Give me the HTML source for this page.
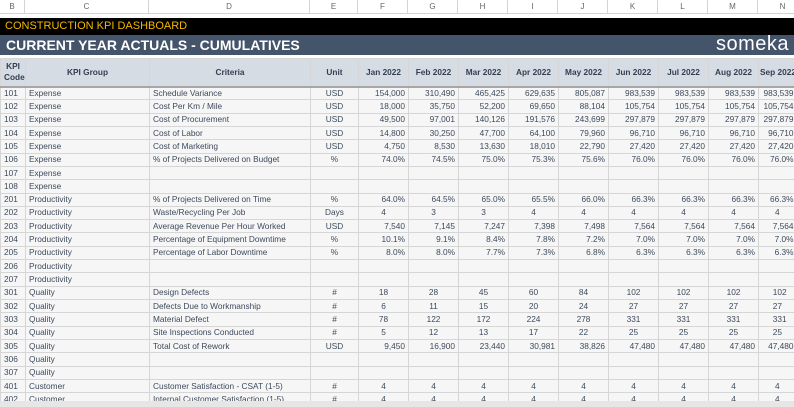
<!DOCTYPE html><html><head><style>
*{margin:0;padding:0;box-sizing:border-box}
body{width:794px;height:407px;overflow:hidden;background:#fff;font-family:"Liberation Sans",sans-serif;position:relative}
.colh{position:absolute;top:0;height:14px;border-right:1px solid #d4d4d4;border-bottom:1px solid #d4d4d4;font-size:8px;color:#666;text-align:center;line-height:13px}
.bk{position:absolute;left:0;top:18px;width:794px;height:17px;background:#000;color:#f5b800;font-size:11px;line-height:17px;padding-left:5px}
.sl{position:absolute;left:0;top:35px;width:794px;height:20px;background:#44546a;color:#fff;font-weight:bold;font-size:14px;line-height:20px;padding-left:6px}
.logo{position:absolute;right:5px;top:34px;color:#fff;font-size:20px;line-height:20px;letter-spacing:0.5px}
table{position:absolute;left:0;top:58px;border-collapse:collapse;table-layout:fixed;width:794px}
td{border:1px solid #d6d6d6;font-size:8.3px;color:#3d4a5c;height:13.32px;line-height:11px;padding:0 3px;white-space:nowrap;overflow:hidden;background:#f6f6f6}
thead td{background:#d6dce4;font-weight:bold;text-align:center;height:28px;color:#333f50;border-bottom:2px solid #a6a6a6}
td.n{text-align:right}td.c{text-align:center}
td:last-child{text-align:right;padding:0 1px;border-right:none}
.foot{position:absolute;left:0;top:401px;width:794px;height:6px;background:#e6e6e6}
</style></head><body>
<div class="colh" style="left:0;width:25px">B</div><div class="colh" style="left:25px;width:124px">C</div><div class="colh" style="left:149px;width:161px">D</div><div class="colh" style="left:310px;width:48px">E</div><div class="colh" style="left:358px;width:50px">F</div><div class="colh" style="left:408px;width:50px">G</div><div class="colh" style="left:458px;width:50px">H</div><div class="colh" style="left:508px;width:50px">I</div><div class="colh" style="left:558px;width:50px">J</div><div class="colh" style="left:608px;width:50px">K</div><div class="colh" style="left:658px;width:50px">L</div><div class="colh" style="left:708px;width:50px">M</div><div class="colh" style="left:758px;width:50px">N</div>
<div class="bk">CONSTRUCTION KPI DASHBOARD</div>
<div class="sl">CURRENT YEAR ACTUALS - CUMULATIVES</div>
<div class="logo">someka</div>
<table>
<colgroup><col style="width:25px"><col style="width:124px"><col style="width:161px"><col style="width:48px"><col style="width:50px"><col style="width:50px"><col style="width:50px"><col style="width:50px"><col style="width:50px"><col style="width:50px"><col style="width:50px"><col style="width:50px"><col style="width:36px"></colgroup>
<thead><tr><td>KPI<br>Code</td><td>KPI Group</td><td>Criteria</td><td>Unit</td><td>Jan 2022</td><td>Feb 2022</td><td>Mar 2022</td><td>Apr 2022</td><td>May 2022</td><td>Jun 2022</td><td>Jul 2022</td><td>Aug 2022</td><td style="text-align:left">Sep 2022</td></tr></thead>
<tbody>
<tr><td>101</td><td>Expense</td><td>Schedule Variance</td><td class="c">USD</td><td class="n">154,000</td><td class="n">310,490</td><td class="n">465,425</td><td class="n">629,635</td><td class="n">805,087</td><td class="n">983,539</td><td class="n">983,539</td><td class="n">983,539</td><td>983,539</td></tr>
<tr><td>102</td><td>Expense</td><td>Cost Per Km / Mile</td><td class="c">USD</td><td class="n">18,000</td><td class="n">35,750</td><td class="n">52,200</td><td class="n">69,650</td><td class="n">88,104</td><td class="n">105,754</td><td class="n">105,754</td><td class="n">105,754</td><td>105,754</td></tr>
<tr><td>103</td><td>Expense</td><td>Cost of Procurement</td><td class="c">USD</td><td class="n">49,500</td><td class="n">97,001</td><td class="n">140,126</td><td class="n">191,576</td><td class="n">243,699</td><td class="n">297,879</td><td class="n">297,879</td><td class="n">297,879</td><td>297,879</td></tr>
<tr><td>104</td><td>Expense</td><td>Cost of Labor</td><td class="c">USD</td><td class="n">14,800</td><td class="n">30,250</td><td class="n">47,700</td><td class="n">64,100</td><td class="n">79,960</td><td class="n">96,710</td><td class="n">96,710</td><td class="n">96,710</td><td>96,710</td></tr>
<tr><td>105</td><td>Expense</td><td>Cost of Marketing</td><td class="c">USD</td><td class="n">4,750</td><td class="n">8,530</td><td class="n">13,630</td><td class="n">18,010</td><td class="n">22,790</td><td class="n">27,420</td><td class="n">27,420</td><td class="n">27,420</td><td>27,420</td></tr>
<tr><td>106</td><td>Expense</td><td>% of Projects Delivered on Budget</td><td class="c">%</td><td class="n">74.0%</td><td class="n">74.5%</td><td class="n">75.0%</td><td class="n">75.3%</td><td class="n">75.6%</td><td class="n">76.0%</td><td class="n">76.0%</td><td class="n">76.0%</td><td>76.0%</td></tr>
<tr><td>107</td><td>Expense</td><td></td><td></td><td></td><td></td><td></td><td></td><td></td><td></td><td></td><td></td><td></td></tr>
<tr><td>108</td><td>Expense</td><td></td><td></td><td></td><td></td><td></td><td></td><td></td><td></td><td></td><td></td><td></td></tr>
<tr><td>201</td><td>Productivity</td><td>% of Projects Delivered on Time</td><td class="c">%</td><td class="n">64.0%</td><td class="n">64.5%</td><td class="n">65.0%</td><td class="n">65.5%</td><td class="n">66.0%</td><td class="n">66.3%</td><td class="n">66.3%</td><td class="n">66.3%</td><td>66.3%</td></tr>
<tr><td>202</td><td>Productivity</td><td>Waste/Recycling Per Job</td><td class="c">Days</td><td class="c">4</td><td class="c">3</td><td class="c">3</td><td class="c">4</td><td class="c">4</td><td class="c">4</td><td class="c">4</td><td class="c">4</td><td>4&nbsp;&nbsp;&nbsp;&nbsp;&nbsp;&nbsp;</td></tr>
<tr><td>203</td><td>Productivity</td><td>Average Revenue Per Hour Worked</td><td class="c">USD</td><td class="n">7,540</td><td class="n">7,145</td><td class="n">7,247</td><td class="n">7,398</td><td class="n">7,498</td><td class="n">7,564</td><td class="n">7,564</td><td class="n">7,564</td><td>7,564</td></tr>
<tr><td>204</td><td>Productivity</td><td>Percentage of Equipment Downtime</td><td class="c">%</td><td class="n">10.1%</td><td class="n">9.1%</td><td class="n">8.4%</td><td class="n">7.8%</td><td class="n">7.2%</td><td class="n">7.0%</td><td class="n">7.0%</td><td class="n">7.0%</td><td>7.0%</td></tr>
<tr><td>205</td><td>Productivity</td><td>Percentage of Labor Downtime</td><td class="c">%</td><td class="n">8.0%</td><td class="n">8.0%</td><td class="n">7.7%</td><td class="n">7.3%</td><td class="n">6.8%</td><td class="n">6.3%</td><td class="n">6.3%</td><td class="n">6.3%</td><td>6.3%</td></tr>
<tr><td>206</td><td>Productivity</td><td></td><td></td><td></td><td></td><td></td><td></td><td></td><td></td><td></td><td></td><td></td></tr>
<tr><td>207</td><td>Productivity</td><td></td><td></td><td></td><td></td><td></td><td></td><td></td><td></td><td></td><td></td><td></td></tr>
<tr><td>301</td><td>Quality</td><td>Design Defects</td><td class="c">#</td><td class="c">18</td><td class="c">28</td><td class="c">45</td><td class="c">60</td><td class="c">84</td><td class="c">102</td><td class="c">102</td><td class="c">102</td><td>102&nbsp;&nbsp;&nbsp;</td></tr>
<tr><td>302</td><td>Quality</td><td>Defects Due to Workmanship</td><td class="c">#</td><td class="c">6</td><td class="c">11</td><td class="c">15</td><td class="c">20</td><td class="c">24</td><td class="c">27</td><td class="c">27</td><td class="c">27</td><td>27&nbsp;&nbsp;&nbsp;&nbsp;&nbsp;</td></tr>
<tr><td>303</td><td>Quality</td><td>Material Defect</td><td class="c">#</td><td class="c">78</td><td class="c">122</td><td class="c">172</td><td class="c">224</td><td class="c">278</td><td class="c">331</td><td class="c">331</td><td class="c">331</td><td>331&nbsp;&nbsp;&nbsp;</td></tr>
<tr><td>304</td><td>Quality</td><td>Site Inspections Conducted</td><td class="c">#</td><td class="c">5</td><td class="c">12</td><td class="c">13</td><td class="c">17</td><td class="c">22</td><td class="c">25</td><td class="c">25</td><td class="c">25</td><td>25&nbsp;&nbsp;&nbsp;&nbsp;&nbsp;</td></tr>
<tr><td>305</td><td>Quality</td><td>Total Cost of Rework</td><td class="c">USD</td><td class="n">9,450</td><td class="n">16,900</td><td class="n">23,440</td><td class="n">30,981</td><td class="n">38,826</td><td class="n">47,480</td><td class="n">47,480</td><td class="n">47,480</td><td>47,480</td></tr>
<tr><td>306</td><td>Quality</td><td></td><td></td><td></td><td></td><td></td><td></td><td></td><td></td><td></td><td></td><td></td></tr>
<tr><td>307</td><td>Quality</td><td></td><td></td><td></td><td></td><td></td><td></td><td></td><td></td><td></td><td></td><td></td></tr>
<tr><td>401</td><td>Customer</td><td>Customer Satisfaction - CSAT (1-5)</td><td class="c">#</td><td class="c">4</td><td class="c">4</td><td class="c">4</td><td class="c">4</td><td class="c">4</td><td class="c">4</td><td class="c">4</td><td class="c">4</td><td>4&nbsp;&nbsp;&nbsp;&nbsp;&nbsp;&nbsp;</td></tr>
<tr><td>402</td><td>Customer</td><td>Internal Customer Satisfaction (1-5)</td><td class="c">#</td><td class="c">4</td><td class="c">4</td><td class="c">4</td><td class="c">4</td><td class="c">4</td><td class="c">4</td><td class="c">4</td><td class="c">4</td><td>4&nbsp;&nbsp;&nbsp;&nbsp;&nbsp;&nbsp;</td></tr>
</tbody></table>
<div class="foot"></div>
</body></html>
